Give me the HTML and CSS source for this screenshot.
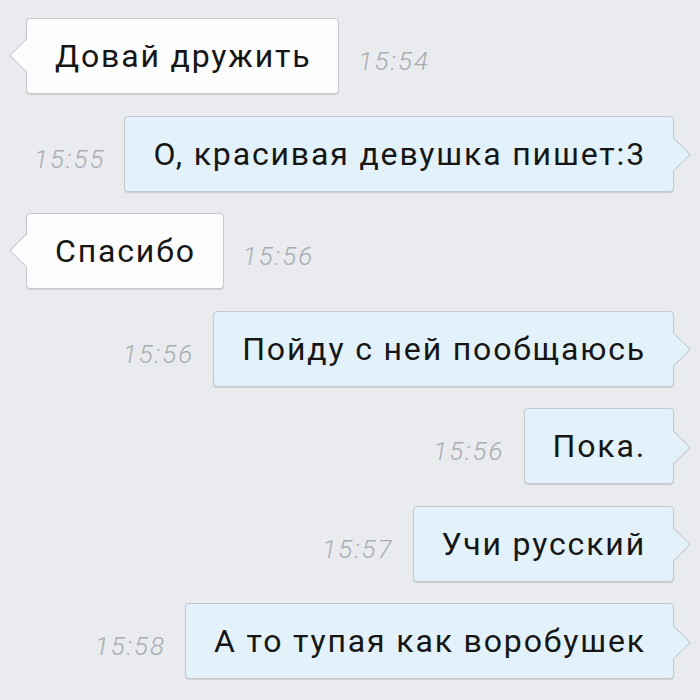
FILE: index.html
```html
<!doctype html>
<html lang="ru">
<head>
<title>Чат</title>
<meta charset="utf-8">
<link rel="stylesheet" href="styles.css">
</head>
<body>

<main class="chat">
	<div class="row in">
		<p class="bubble">Довай дружить</p>
		<time class="stamp">15:54</time>
	</div>
	<div class="row out">
		<time class="stamp">15:55</time>
		<p class="bubble">О, красивая девушка пишет:3</p>
	</div>
	<div class="row in">
		<p class="bubble">Спасибо</p>
		<time class="stamp">15:56</time>
	</div>
	<div class="row out">
		<time class="stamp">15:56</time>
		<p class="bubble">Пойду с ней пообщаюсь</p>
	</div>
	<div class="row out">
		<time class="stamp">15:56</time>
		<p class="bubble">Пока.</p>
	</div>
	<div class="row out">
		<time class="stamp">15:57</time>
		<p class="bubble">Учи русский</p>
	</div>
	<div class="row out">
		<time class="stamp">15:58</time>
		<p class="bubble">А то тупая как воробушек</p>
	</div>
</main>

</body>
</html>
```
FILE: styles.css
```css
html, body {
	margin: 0;
	height: 100%;
	background: #e9ebee;
}
.chat {
	display: flex;
	flex-direction: column;
	gap: 21.5px;
	padding: 18px 26px 0 26px;
	font-family: Roboto, "Noto Sans", sans-serif;
}
.row {
	display: flex;
	align-items: center;
	gap: 19px;
	height: 76px;
}
.row.out {
	justify-content: flex-end;
}
.bubble {
	position: relative;
	box-sizing: border-box;
	height: 76px;
	margin: 0;
	padding: 0 27px 0 28px;
	display: flex;
	align-items: center;
	font-size: 32px;
	letter-spacing: 1.85px;
	color: #161616;
	background: #fdfdfd;
	border: 1px solid #c3c9cf;
	border-radius: 4px;
	box-shadow: 0 1px 1px rgba(0, 0, 0, 0.12);
}
.out .bubble {
	background: #e3f2fa;
}
/* tail */
.bubble::before {
	content: "";
	position: absolute;
	top: 50%;
	width: 23px;
	height: 23px;
	margin-top: -10.5px;
	background: inherit;
	box-sizing: border-box;
	transform: rotate(45deg);
}
.in .bubble::before {
	left: -13px;
	margin-top: -12.5px;
	border-left: 1px solid #c3c9cf;
	border-bottom: 1px solid #c3c9cf;
}
.out .bubble::before {
	right: -13px;
	border-right: 1px solid #c3c9cf;
	border-top: 1px solid #c3c9cf;
}
.stamp {
	padding-top: 10px;
	font-size: 26px;
	letter-spacing: 2px;
	font-weight: 300;
	font-style: italic;
	color: #a9adb2;
}
```
